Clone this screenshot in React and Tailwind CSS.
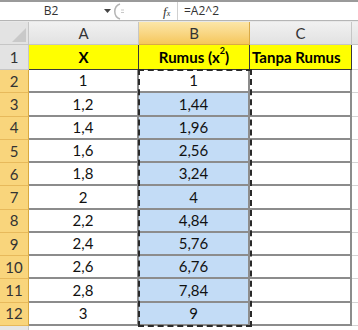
import React from 'react';

const data = [
  ['1', '1'],
  ['1,2', '1,44'],
  ['1,4', '1,96'],
  ['1,6', '2,56'],
  ['1,8', '3,24'],
  ['2', '4'],
  ['2,2', '4,84'],
  ['2,4', '5,76'],
  ['2,6', '6,76'],
  ['2,8', '7,84'],
  ['3', '9'],
];

const App = () => {
  return (
    <div className="w-[358px] h-[330px] overflow-hidden bg-white font-['Lato',sans-serif] text-[#222]">
      {/* Formula bar */}
      <div className="h-[21px] border-t-2 border-t-[#9a9a9a] border-b border-b-[#b5b5b5] flex items-center text-[12px] font-['Open_Sans',sans-serif] text-[#333]">
        <div className="w-[100px] text-center pl-[2px]">B2</div>
        <div className="w-[14px] flex justify-center">
          <svg width="7" height="4" viewBox="0 0 7 4"><path d="M0 0 L7 0 L3.5 4 Z" fill="#444" /></svg>
        </div>
        <div className="w-[12px] h-[17px] flex items-center">
          <svg width="12" height="17" viewBox="0 0 12 17">
            <path d="M6 1 A8 8 0 0 0 6 16" stroke="#b4b4b4" strokeWidth="1.5" fill="none" />
            <path d="M7 7 H10 M7 9.5 H10" stroke="#c8c8c8" strokeWidth="1" />
          </svg>
        </div>
        <div className="w-[37px]" />
        <div className="w-[14px] font-['Liberation_Serif',serif] italic text-[13px] leading-none text-[#333]">
          f<span className="text-[8px]">x</span>
        </div>
        <div className="h-full border-l border-[#d0d0d0] pl-[6px] flex items-center">=A2^2</div>
      </div>

      <div className="h-[1px] bg-[#e8e8e8]" />

      <div className="relative">
        {/* Column headers */}
        <div className="flex h-[23px] text-[15px] text-[#333]">
          <div className="w-[29px] bg-[#e3e3e3] border-r border-b border-[#c6c6c6] relative">
            <svg className="absolute right-[2px] bottom-[2px]" width="14" height="14" viewBox="0 0 14 14">
              <path d="M14 0 L14 14 L0 14 Z" fill="#c9c9c9" />
            </svg>
          </div>
          <div className="w-[110px] bg-gradient-to-b from-[#f1f1f1] to-[#e2e2e2] border-r border-b border-[#c6c6c6] flex items-center justify-center">A</div>
          <div className="w-[111px] bg-gradient-to-b from-[#fce6a8] to-[#f5c75a] border-r border-b border-[#d9aa47] flex items-center justify-center">B</div>
          <div className="w-[102px] bg-gradient-to-b from-[#f1f1f1] to-[#e2e2e2] border-r border-b border-[#c6c6c6] flex items-center justify-center">C</div>
          <div className="flex-1 bg-gradient-to-b from-[#f1f1f1] to-[#e2e2e2] border-b border-[#c6c6c6]" />
        </div>

        {/* Row 1 */}
        <div className="flex h-[25px] text-[15px]">
          <div className="w-[29px] bg-[#e3e3e3] border-r border-b border-[#c6c6c6] flex items-center justify-center text-[#333]">1</div>
          <div className="w-[110px] bg-[#ffff00] border-r border-b border-[#3a3a3a] flex items-center justify-center font-bold text-black">X</div>
          <div className="w-[111px] bg-[#ffff00] border-r border-b border-[#3a3a3a] flex items-center justify-center font-bold text-black">
            Rumus (x<sup className="text-[9px] -top-[6px]">2</sup>)
          </div>
          <div className="w-[102px] bg-[#ffff00] border-r border-b border-[#3a3a3a] flex items-center pl-[2px] font-bold text-black">Tanpa Rumus</div>
          <div className="flex-1 border-b border-[#d4d4d4]" />
        </div>

        {/* Data rows */}
        {data.map(([x, y], i) => (
          <div key={i} className="flex h-[23.25px] text-[15px]">
            <div className="w-[29px] bg-[#f9d57c] border-r border-r-[#d9a93f] border-b border-b-[#e7b95b] flex items-center justify-center text-[#333]">
              {i + 2}
            </div>
            <div className="w-[110px] border-r-2 border-b-2 border-[#8c8c8c] flex items-center justify-center text-[#111]">{x}</div>
            <div className={`w-[111px] border-r-2 border-b-2 border-[#8c8c8c] flex items-center justify-center text-[#111] ${i === 0 ? 'bg-white' : 'bg-[#c3dcf6]'}`}>{y}</div>
            <div className="w-[102px] border-r-2 border-b-2 border-[#8c8c8c]" />
            <div className="flex-1 border-b border-[#d4d4d4]" />
          </div>
        ))}

        <div className="flex h-[10px]">
          <div className="w-[29px] bg-[#e6e6e6] border-r border-[#c6c6c6]" />
          <div className="flex-1" />
        </div>

        {/* Copy marquee */}
        <div className="absolute left-[138px] top-[47px] w-[114px] h-[258px] border-2 border-dashed border-[#2a2a2a] pointer-events-none" />
      </div>
    </div>
  );
};

export default App;
